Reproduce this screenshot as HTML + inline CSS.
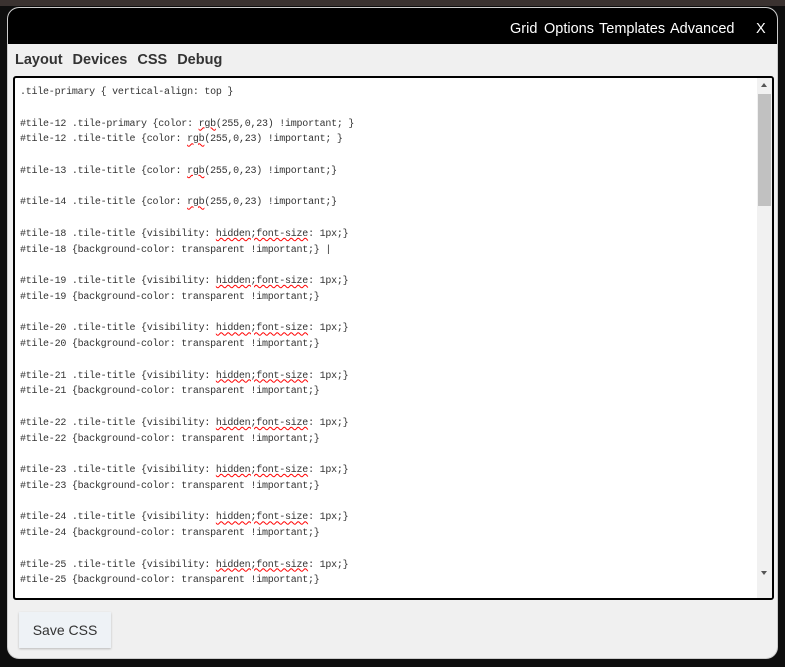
<!DOCTYPE html>
<html><head><style>
body{margin:0;width:785px;height:667px;background:#0e0e0e;position:relative;overflow:hidden;font-family:"Liberation Sans",sans-serif}
.top{position:absolute;left:0;top:0;width:785px;height:6px;background:#3a3230}
.dlg{position:absolute;left:7px;top:7px;width:771px;height:652px;background:#f0f0f0;border-radius:12px;overflow:hidden;border:1px solid #ccc;box-sizing:border-box}
.bar{height:36px;background:#000;color:#fff;font-size:14.5px;position:relative}
.bar span{position:absolute;top:13px}
.tabs{position:absolute;top:44px;left:7px;font-size:14.5px;font-weight:bold;color:#333}
.tabs span{margin-right:10px}
.ta{position:absolute;left:5px;top:68px;width:761px;height:524px;border:2px solid #000;border-radius:3px;background:#fff;box-sizing:border-box;overflow:hidden}
pre{margin:0;position:absolute;left:5px;top:7px;font-family:"Liberation Mono",monospace;font-size:10px;letter-spacing:-0.24px;line-height:15.75px;color:#333}
u{text-decoration:underline wavy red;text-decoration-thickness:1px}
.sb{position:absolute;right:0;top:0;width:15px;height:100%;background:#f1f1f1}
.th{position:absolute;left:1px;top:16px;width:13px;height:112px;background:#c1c1c1}
.ar{position:absolute;left:4px;width:0;height:0;border-left:3.5px solid transparent;border-right:3.5px solid transparent}
.btn{position:absolute;left:11px;top:604px;width:92px;height:36px;background:#eef2f6;box-shadow:0 1px 2px #bbb;font-size:14px;color:#333;line-height:36px;text-align:center}
</style></head><body>
<div class="top"></div>
<div class="dlg">
<div class="bar"><span style="left:502px">Grid</span><span style="left:536px">Options</span><span style="left:591px">Templates</span><span style="left:662px">Advanced</span><span style="left:748px">X</span></div>
<div class="tabs"><span>Layout</span><span>Devices</span><span>CSS</span><span>Debug</span></div>
<div class="ta"><pre>.tile-primary { vertical-align: top }

#tile-12 .tile-primary {color: <u>rgb</u>(255,0,23) !important; }
#tile-12 .tile-title {color: <u>rgb</u>(255,0,23) !important; }

#tile-13 .tile-title {color: <u>rgb</u>(255,0,23) !important;}

#tile-14 .tile-title {color: <u>rgb</u>(255,0,23) !important;}

#tile-18 .tile-title {visibility: <u>hidden;font-size</u>: 1px;}
#tile-18 {background-color: transparent !important;} |

#tile-19 .tile-title {visibility: <u>hidden;font-size</u>: 1px;}
#tile-19 {background-color: transparent !important;}

#tile-20 .tile-title {visibility: <u>hidden;font-size</u>: 1px;}
#tile-20 {background-color: transparent !important;}

#tile-21 .tile-title {visibility: <u>hidden;font-size</u>: 1px;}
#tile-21 {background-color: transparent !important;}

#tile-22 .tile-title {visibility: <u>hidden;font-size</u>: 1px;}
#tile-22 {background-color: transparent !important;}

#tile-23 .tile-title {visibility: <u>hidden;font-size</u>: 1px;}
#tile-23 {background-color: transparent !important;}

#tile-24 .tile-title {visibility: <u>hidden;font-size</u>: 1px;}
#tile-24 {background-color: transparent !important;}

#tile-25 .tile-title {visibility: <u>hidden;font-size</u>: 1px;}
#tile-25 {background-color: transparent !important;}</pre>
<div class="sb"><div class="ar" style="top:5px;border-bottom:4px solid #555"></div><div class="th"></div><div class="ar" style="top:493px;border-top:4px solid #555"></div></div>
</div>
<div class="btn">Save CSS</div>
</div>
</body></html>
